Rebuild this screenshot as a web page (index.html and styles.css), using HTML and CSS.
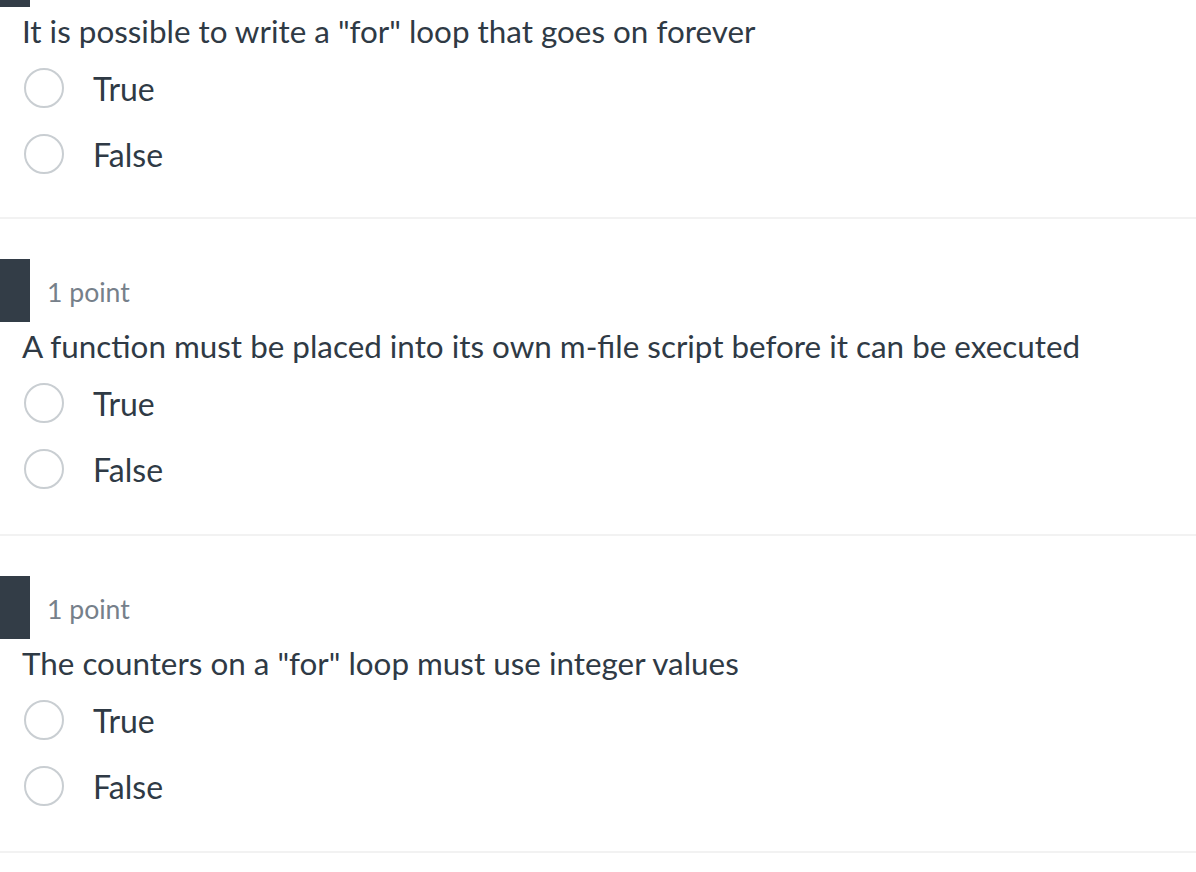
FILE: index.html
```html
<!DOCTYPE html>
<html>
<head>
<meta charset="utf-8">
<link rel="stylesheet" href="styles.css">
</head>
<body>
<div class="quiz">
  <div class="question">
    <div class="q-head q-head-partial"><span class="q-bar"></span></div>
    <div class="q-text">It is possible to write a "for" loop that goes on forever</div>
    <div class="option"><span class="radio"></span><span class="opt-label">True</span></div>
    <div class="option"><span class="radio"></span><span class="opt-label">False</span></div>
  </div>
  <div class="question">
    <div class="q-head"><span class="q-bar"></span><span class="q-points">1 point</span></div>
    <div class="q-text">A function must be placed into its own m-file script before it can be executed</div>
    <div class="option"><span class="radio"></span><span class="opt-label">True</span></div>
    <div class="option"><span class="radio"></span><span class="opt-label">False</span></div>
  </div>
  <div class="question">
    <div class="q-head"><span class="q-bar"></span><span class="q-points">1 point</span></div>
    <div class="q-text">The counters on a "for" loop must use integer values</div>
    <div class="option"><span class="radio"></span><span class="opt-label">True</span></div>
    <div class="option"><span class="radio"></span><span class="opt-label">False</span></div>
  </div>
</div>
</body>
</html>
```
FILE: styles.css
```css
html, body {
  margin: 0;
  padding: 0;
  background: #ffffff;
}
body {
  font-family: Lato, "Open Sans", sans-serif;
  color: #2f3a45;
  overflow: hidden;
}
.question {
  padding-top: 40px;
  padding-bottom: 32px;
  border-bottom: 2px solid #f2f2f2;
}
.question:first-child {
  padding-top: 0;
  padding-bottom: 30px;
}
.q-head {
  display: flex;
  align-items: center;
  height: 63px;
}
.q-head-partial {
  height: 7px;
  align-items: stretch;
}
.q-bar {
  width: 30px;
  height: 63px;
  background: #333d47;
}
.q-head-partial .q-bar {
  height: 7px;
}
.q-points {
  margin-left: 17px;
  font-size: 26.6px;
  color: #76808a;
  padding-top: 3px;
}
.q-text {
  margin-top: 6px;
  margin-bottom: 6px;
  padding-left: 22px;
  font-size: 31.4px;
  line-height: 36px;
}
.option {
  display: flex;
  align-items: center;
  height: 66px;
  padding-left: 24px;
}
.radio {
  box-sizing: border-box;
  width: 40px;
  height: 40px;
  border: 2px solid #c9ced2;
  border-radius: 50%;
  flex: none;
}
.opt-label {
  margin-left: 29px;
  font-size: 32px;
}
```
